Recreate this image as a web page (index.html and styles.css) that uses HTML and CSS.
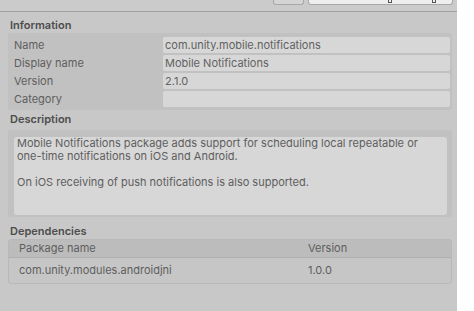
FILE: index.html
```html
<!DOCTYPE html>
<html>

<head>
    <title>Package Details</title>
    <link rel="stylesheet" href="styles.css">
</head>

<body>
    <div class="panel">
        <!-- Toolbar, scrolled so only the bottom of its buttons shows -->
        <div class="toolbar">
            <div class="tool-btn small"></div>
            <div class="tool-btn wide">
                <span class="caret"></span>
                <span class="caret"></span>
            </div>
        </div>

        <!-- Information -->
        <div class="section-title">Information</div>
        <div class="box info">
            <div class="row">
                <div class="label">Name</div>
                <div class="field">com.unity.mobile.notifications</div>
            </div>
            <div class="row">
                <div class="label">Display name</div>
                <div class="field">Mobile Notifications</div>
            </div>
            <div class="row">
                <div class="label">Version</div>
                <div class="field">2.1.0</div>
            </div>
            <div class="row">
                <div class="label">Category</div>
                <div class="field"></div>
            </div>
        </div>

        <!-- Description -->
        <div class="section-title desc-title">Description</div>
        <div class="box desc">
            <div class="desc-text">
                <p>Mobile Notifications package adds support for scheduling local repeatable or one-time notifications on iOS and Android.</p>
                <p>On iOS receiving of push notifications is also supported.</p>
            </div>
        </div>

        <!-- Dependencies -->
        <div class="section-title deps-title">Dependencies</div>
        <div class="table">
            <div class="trow thead">
                <div class="col-name">Package name</div>
                <div class="col-ver">Version</div>
            </div>
            <div class="trow">
                <div class="col-name">com.unity.modules.androidjni</div>
                <div class="col-ver">1.0.0</div>
            </div>
        </div>
    </div>
</body>

</html>
```
FILE: styles.css
```css
body {
    margin: 0;
    padding: 0;
    background-color: #ffffff;
    font-family: Inter, "Liberation Sans", sans-serif;
    font-size: 11px;
    color: #5e5e5e;
    overflow: hidden;
}

.panel {
    width: 457px;
    height: 311px;
    background-color: #c8c8c8;
    display: flex;
    flex-direction: column;
}

.toolbar {
    height: 12px;
    border-bottom: 1px solid #a2a2a2;
    background-color: #cbcbcb;
    display: flex;
    align-items: flex-start;
    box-sizing: border-box;
    gap: 4px;
    padding-left: 273px;
}

.tool-btn {
    flex: none;
    height: 5px;
    border: 1px solid #a8a8a8;
    border-top: none;
    border-radius: 0 0 3px 3px;
    box-sizing: border-box;
}

.tool-btn.small {
    width: 31px;
    background-color: #d4d4d4;
}

.tool-btn.wide {
    width: 145px;
    background-color: #eeeeee;
    position: relative;
}

.caret {
    position: absolute;
    bottom: 1px;
    width: 2px;
    height: 3px;
    border: 1px solid #555;
    border-top: none;
}

.caret:first-child {
    left: 79px;
}

.caret:last-child {
    left: 123px;
}

.section-title {
    font-weight: 600;
    color: #4d4d4d;
    padding: 3px 0 0 10px;
    height: 17px;
    box-sizing: border-box;
    line-height: 14px;
    margin-top: 3px;
}

.desc-title {
    margin-top: -1px;
}

.deps-title {
    margin-top: 4px;
}

.box {
    margin: 1px 5px 0 8px;
    background-color: #c1c1c1;
    border-radius: 3px;
}

.info {
    padding: 4px 2px 3px 4px;
    display: flex;
    flex-direction: column;
    gap: 2px;
}

.row {
    display: flex;
    height: 16px;
    line-height: 16px;
}

.label {
    width: 149px;
    padding-left: 2px;
}

.field {
    flex: 1;
    background-color: #d7d7d7;
    border-radius: 2px;
    padding-left: 2px;
    color: #626262;
}

.desc {
    padding: 7px 5px 2px 6px;
    margin-top: 4px;
}

.desc-text {
    background-color: #d7d7d7;
    border-radius: 3px;
    height: 78px;
    padding: 0 3px;
    line-height: 13px;
}

.desc-text p {
    margin: 0 0 13px 0;
}

.table {
    margin: 1px 5px 0 8px;
    border: 1px solid #b8b8b8;
    border-radius: 3px;
    background-color: #c6c6c6;
}

.trow {
    display: flex;
    height: 25px;
    line-height: 25px;
    padding-left: 10px;
}

.thead {
    height: 17px;
    line-height: 17px;
    background-color: #bcbcbc;
    border-bottom: 1px solid #b0b0b0;
}

.col-name {
    width: 289px;
}
```
